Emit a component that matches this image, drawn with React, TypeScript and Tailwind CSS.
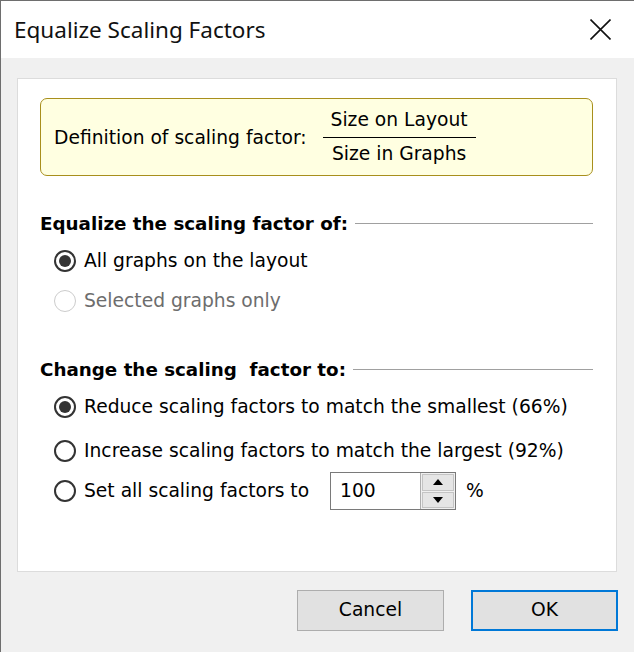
import React from "react";

function Radio({ checked, disabled }: { checked?: boolean; disabled?: boolean }) {
  return (
    <span
      className={
        "w-[22px] h-[22px] rounded-full flex items-center justify-center bg-white shrink-0 " +
        (disabled ? "border-[1.5px] border-[#cccccc]" : "border-2 border-[#333333]")
      }
    >
      {checked && <span className="w-[12px] h-[12px] rounded-full bg-[#333333]" />}
    </span>
  );
}

function Heading({ children, mt }: { children: React.ReactNode; mt: string }) {
  return (
    <div className={"h-[30px] flex items-center " + mt}>
      <span className="font-bold text-[18.3px] whitespace-pre">{children}</span>
      <div className="flex-1 h-px bg-[#a0a0a0] ml-[7px] mt-[-2px]" />
    </div>
  );
}

function RadioRow({
  children,
  checked,
  disabled,
  className = "",
}: {
  children: React.ReactNode;
  checked?: boolean;
  disabled?: boolean;
  className?: string;
}) {
  return (
    <div className={"h-[40px] flex items-center pl-[14px] gap-[8px] " + className}>
      <Radio checked={checked} disabled={disabled} />
      {children}
    </div>
  );
}

export default function App() {
  return (
    <div className="w-[634px] h-[652px] bg-[#f0f0f0] border-l border-t border-[#6e6e6e] flex flex-col font-['DejaVu_Sans',sans-serif] text-[18.7px] text-black overflow-hidden">
      <div className="h-[57px] shrink-0 bg-white flex items-center justify-between pl-[13px] pr-[23px]">
        <span className="font-['Noto_Sans',sans-serif] text-[22.5px] text-[#111]">Equalize Scaling Factors</span>
        <svg width="21" height="21" viewBox="0 0 21 21">
          <path d="M0.5 0.5L20.5 20.5M20.5 0.5L0.5 20.5" stroke="#111" strokeWidth="1.6" fill="none" />
        </svg>
      </div>
      <div className="flex-1 flex flex-col px-[16px] pt-[20px]">
        <div className="w-[600px] h-[494px] shrink-0 bg-white border border-[#dcdcdc] flex flex-col pl-[22px] pr-[23px] pt-[19px]">
          <div className="h-[78px] shrink-0 rounded-[7px] border border-[#a88f1c] bg-[#ffffe1] flex items-center pl-[13px]">
            <span className="mt-[3px]">Definition of scaling factor:</span>
            <div className="ml-[16px] w-[153px] flex flex-col items-center">
              <div className="h-[30px] leading-[30px]">Size on Layout</div>
              <div className="w-full h-px bg-black mt-[2px] mb-[1px]" />
              <div className="h-[30px] leading-[30px]">Size in Graphs</div>
            </div>
          </div>

          <Heading mt="mt-[33px]">Equalize the scaling factor of:</Heading>
          <RadioRow checked className="mt-[2px]">
            <span>All graphs on the layout</span>
          </RadioRow>
          <RadioRow disabled>
            <span className="text-[#6d6d6d]">Selected graphs only</span>
          </RadioRow>

          <Heading mt="mt-[34px]">{"Change the scaling  factor to:"}</Heading>
          <RadioRow checked className="mt-[2px]">
            <span>Reduce scaling factors to match the smallest (66%)</span>
          </RadioRow>
          <RadioRow className="mt-[4px]">
            <span>Increase scaling factors to match the largest (92%)</span>
          </RadioRow>
          <RadioRow>
            <span>Set all scaling factors to</span>
            <div className="ml-[13px] w-[126px] h-[38px] flex border border-[#7a7a7a] bg-white">
              <div className="flex-1 flex items-center pl-[9px]">100</div>
              <div className="w-[35px] flex flex-col border-l border-[#adadad] p-[1px] gap-[1px] bg-[#f0f0f0]">
                <div className="flex-1 bg-[#e5e5e5] border border-[#c4c4c4] flex items-center justify-center">
                  <svg width="10" height="6" viewBox="0 0 10 6">
                    <path d="M5 0L10 6H0Z" fill="#000" />
                  </svg>
                </div>
                <div className="flex-1 bg-[#e5e5e5] border border-[#c4c4c4] flex items-center justify-center">
                  <svg width="10" height="6" viewBox="0 0 10 6">
                    <path d="M0 0H10L5 6Z" fill="#000" />
                  </svg>
                </div>
              </div>
            </div>
            <span className="ml-[2px]">%</span>
          </RadioRow>
        </div>

        <div className="mt-[18px] flex justify-end gap-[27px]">
          <button className="w-[147px] h-[41px] bg-[#e1e1e1] border border-[#adadad] flex items-center justify-center">
            Cancel
          </button>
          <button className="w-[147px] h-[41px] bg-[#e1e1e1] border-2 border-[#0078d7] flex items-center justify-center">
            OK
          </button>
        </div>
      </div>
    </div>
  );
}
